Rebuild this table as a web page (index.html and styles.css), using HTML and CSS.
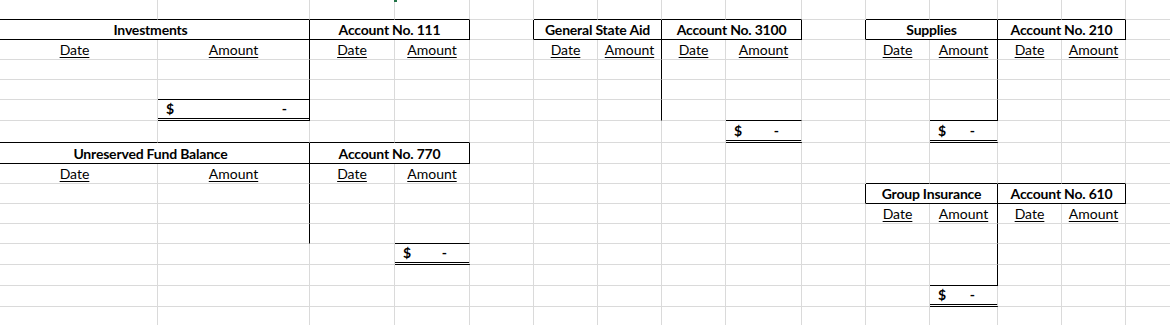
FILE: index.html
```html
<!DOCTYPE html>
<html lang="en">
<head>
<meta charset="utf-8">
<title>T-Accounts</title>
<link rel="stylesheet" href="styles.css">
</head>
<body>
<div class="sheet">
  <div class="sel-handle"></div>

  <!-- row 0 -->
  <div class="row">
    <div class="c bb"></div><div class="c bb"></div><div class="c bb"></div><div class="c bb"></div><div class="c"></div>
    <div class="c bb"></div><div class="c bb"></div><div class="c bb"></div><div class="c bb"></div><div class="c"></div>
    <div class="c bb"></div><div class="c bb"></div><div class="c bb"></div><div class="c bb"></div><div class="c"></div>
  </div>
  <!-- row 1 -->
  <div class="row">
    <div class="c span2 hd br bb">Investments</div>
    <div class="c span2 hd br bb">Account No. 111</div>
    <div class="c br"></div>
    <div class="c span2 hd br bb">General State Aid</div>
    <div class="c span2 hd br bb">Account No. 3100</div>
    <div class="c br"></div>
    <div class="c span2 hd br bb">Supplies</div>
    <div class="c span2 hd br bb">Account No. 210</div>
    <div class="c"></div>
  </div>
  <!-- row 2 -->
  <div class="row">
    <div class="c"><span class="ul">Date</span></div><div class="c br"><span class="ul">Amount</span></div><div class="c"><span class="ul">Date</span></div><div class="c"><span class="ul">Amount</span></div><div class="c"></div>
    <div class="c"><span class="ul">Date</span></div><div class="c br"><span class="ul">Amount</span></div><div class="c"><span class="ul">Date</span></div><div class="c"><span class="ul">Amount</span></div><div class="c"></div>
    <div class="c"><span class="ul">Date</span></div><div class="c br"><span class="ul">Amount</span></div><div class="c"><span class="ul">Date</span></div><div class="c"><span class="ul">Amount</span></div><div class="c"></div>
  </div>
  <!-- row 3 -->
  <div class="row">
    <div class="c"></div><div class="c br"></div><div class="c"></div><div class="c"></div><div class="c"></div>
    <div class="c"></div><div class="c br"></div><div class="c"></div><div class="c"></div><div class="c"></div>
    <div class="c"></div><div class="c br"></div><div class="c"></div><div class="c"></div><div class="c"></div>
  </div>
  <!-- row 4 -->
  <div class="row">
    <div class="c"></div><div class="c br bb"></div><div class="c"></div><div class="c"></div><div class="c"></div>
    <div class="c"></div><div class="c br"></div><div class="c"></div><div class="c"></div><div class="c"></div>
    <div class="c"></div><div class="c br"></div><div class="c"></div><div class="c"></div><div class="c"></div>
  </div>
  <!-- row 5 -->
  <div class="row h21">
    <div class="c"></div><div class="c br dbl tot"><span>$</span><span>-</span></div><div class="c"></div><div class="c"></div><div class="c"></div>
    <div class="c"></div><div class="c br"></div><div class="c"></div><div class="c bb"></div><div class="c"></div>
    <div class="c"></div><div class="c br bb"></div><div class="c"></div><div class="c"></div><div class="c"></div>
  </div>
  <!-- row 6 -->
  <div class="row h22">
    <div class="c bb"></div><div class="c bb"></div><div class="c bb"></div><div class="c bb"></div><div class="c"></div>
    <div class="c"></div><div class="c"></div><div class="c"></div><div class="c dbl tot"><span>$</span><span>-</span></div><div class="c"></div>
    <div class="c"></div><div class="c dbl tot"><span>$</span><span>-</span></div><div class="c"></div><div class="c"></div><div class="c"></div>
  </div>
  <!-- row 7 -->
  <div class="row h21">
    <div class="c span2 hd br bb">Unreserved Fund Balance</div>
    <div class="c span2 hd br bb">Account No. 770</div>
    <div class="c"></div>
    <div class="c"></div><div class="c"></div><div class="c"></div><div class="c"></div><div class="c"></div>
    <div class="c"></div><div class="c"></div><div class="c"></div><div class="c"></div><div class="c"></div>
  </div>
  <!-- row 8 -->
  <div class="row">
    <div class="c"><span class="ul">Date</span></div><div class="c br"><span class="ul">Amount</span></div><div class="c"><span class="ul">Date</span></div><div class="c"><span class="ul">Amount</span></div><div class="c"></div>
    <div class="c"></div><div class="c"></div><div class="c"></div><div class="c"></div><div class="c"></div>
    <div class="c bb"></div><div class="c bb"></div><div class="c bb"></div><div class="c bb"></div><div class="c"></div>
  </div>
  <!-- row 9 -->
  <div class="row">
    <div class="c"></div><div class="c br"></div><div class="c"></div><div class="c"></div><div class="c"></div>
    <div class="c"></div><div class="c"></div><div class="c"></div><div class="c"></div><div class="c br"></div>
    <div class="c span2 hd br bb">Group Insurance</div>
    <div class="c span2 hd br bb">Account No. 610</div>
    <div class="c"></div>
  </div>
  <!-- row 10 -->
  <div class="row">
    <div class="c"></div><div class="c br"></div><div class="c"></div><div class="c"></div><div class="c"></div>
    <div class="c"></div><div class="c"></div><div class="c"></div><div class="c"></div><div class="c"></div>
    <div class="c"><span class="ul">Date</span></div><div class="c br"><span class="ul">Amount</span></div><div class="c"><span class="ul">Date</span></div><div class="c"><span class="ul">Amount</span></div><div class="c"></div>
  </div>
  <!-- row 11 -->
  <div class="row">
    <div class="c"></div><div class="c br"></div><div class="c"></div><div class="c bb"></div><div class="c"></div>
    <div class="c"></div><div class="c"></div><div class="c"></div><div class="c"></div><div class="c"></div>
    <div class="c"></div><div class="c br"></div><div class="c"></div><div class="c"></div><div class="c"></div>
  </div>
  <!-- row 12 -->
  <div class="row h21">
    <div class="c"></div><div class="c"></div><div class="c"></div><div class="c dbl tot"><span>$</span><span>-</span></div><div class="c"></div>
    <div class="c"></div><div class="c"></div><div class="c"></div><div class="c"></div><div class="c"></div>
    <div class="c"></div><div class="c br"></div><div class="c"></div><div class="c"></div><div class="c"></div>
  </div>
  <!-- row 13 -->
  <div class="row h21">
    <div class="c"></div><div class="c"></div><div class="c"></div><div class="c"></div><div class="c"></div>
    <div class="c"></div><div class="c"></div><div class="c"></div><div class="c"></div><div class="c"></div>
    <div class="c"></div><div class="c br bb"></div><div class="c"></div><div class="c"></div><div class="c"></div>
  </div>
  <!-- row 14 -->
  <div class="row h21">
    <div class="c"></div><div class="c"></div><div class="c"></div><div class="c"></div><div class="c"></div>
    <div class="c"></div><div class="c"></div><div class="c"></div><div class="c"></div><div class="c"></div>
    <div class="c"></div><div class="c dbl tot"><span>$</span><span>-</span></div><div class="c"></div><div class="c"></div><div class="c"></div>
  </div>
  <!-- row 15 -->
  <div class="row">
    <div class="c"></div><div class="c"></div><div class="c"></div><div class="c"></div><div class="c"></div>
    <div class="c"></div><div class="c"></div><div class="c"></div><div class="c"></div><div class="c"></div>
    <div class="c"></div><div class="c"></div><div class="c"></div><div class="c"></div><div class="c"></div>
  </div>
</div>
</body>
</html>
```

FILE: styles.css
```css
html, body {
  margin: 0;
  padding: 0;
  background: #ffffff;
  overflow: hidden;
}

body {
  width: 1170px;
  height: 325px;
}

.sheet {
  position: relative;
  margin-left: -8px;
  font-family: Lato, "Liberation Sans", sans-serif;
  font-size: 14px;
  color: #000000;
}

.row {
  display: grid;
  grid-template-columns: 166px 152px 85px 75px 64px 64px 64px 64px 76px 64px 64px 68px 64px 64px 64px;
  height: 20px;
}

.h21 { height: 21px; }
.h22 { height: 22px; }

.c {
  box-sizing: border-box;
  border-right: 1px solid #dadada;
  border-bottom: 1px solid #dadada;
  display: flex;
  align-items: flex-end;
  justify-content: center;
  padding-bottom: 1px;
  line-height: 17px;
  white-space: nowrap;
  min-width: 0;
}

.span2 { grid-column: span 2; }

.hd {
  font-weight: 700;
  letter-spacing: -0.2px;
}

.br { border-right-color: #000000; }
.bb { border-bottom-color: #000000; }
.dbl { border-bottom: 3px double #000000; }

.ul {
  text-decoration: underline;
  text-decoration-thickness: 1px;
  text-underline-offset: 2px;
}

.tot {
  justify-content: space-between;
  padding: 0 22px 1px 8px;
  font-weight: 700;
}

.sel-handle {
  position: absolute;
  left: 402px;
  top: 0;
  width: 3px;
  height: 2px;
  background: #217346;
}
```
